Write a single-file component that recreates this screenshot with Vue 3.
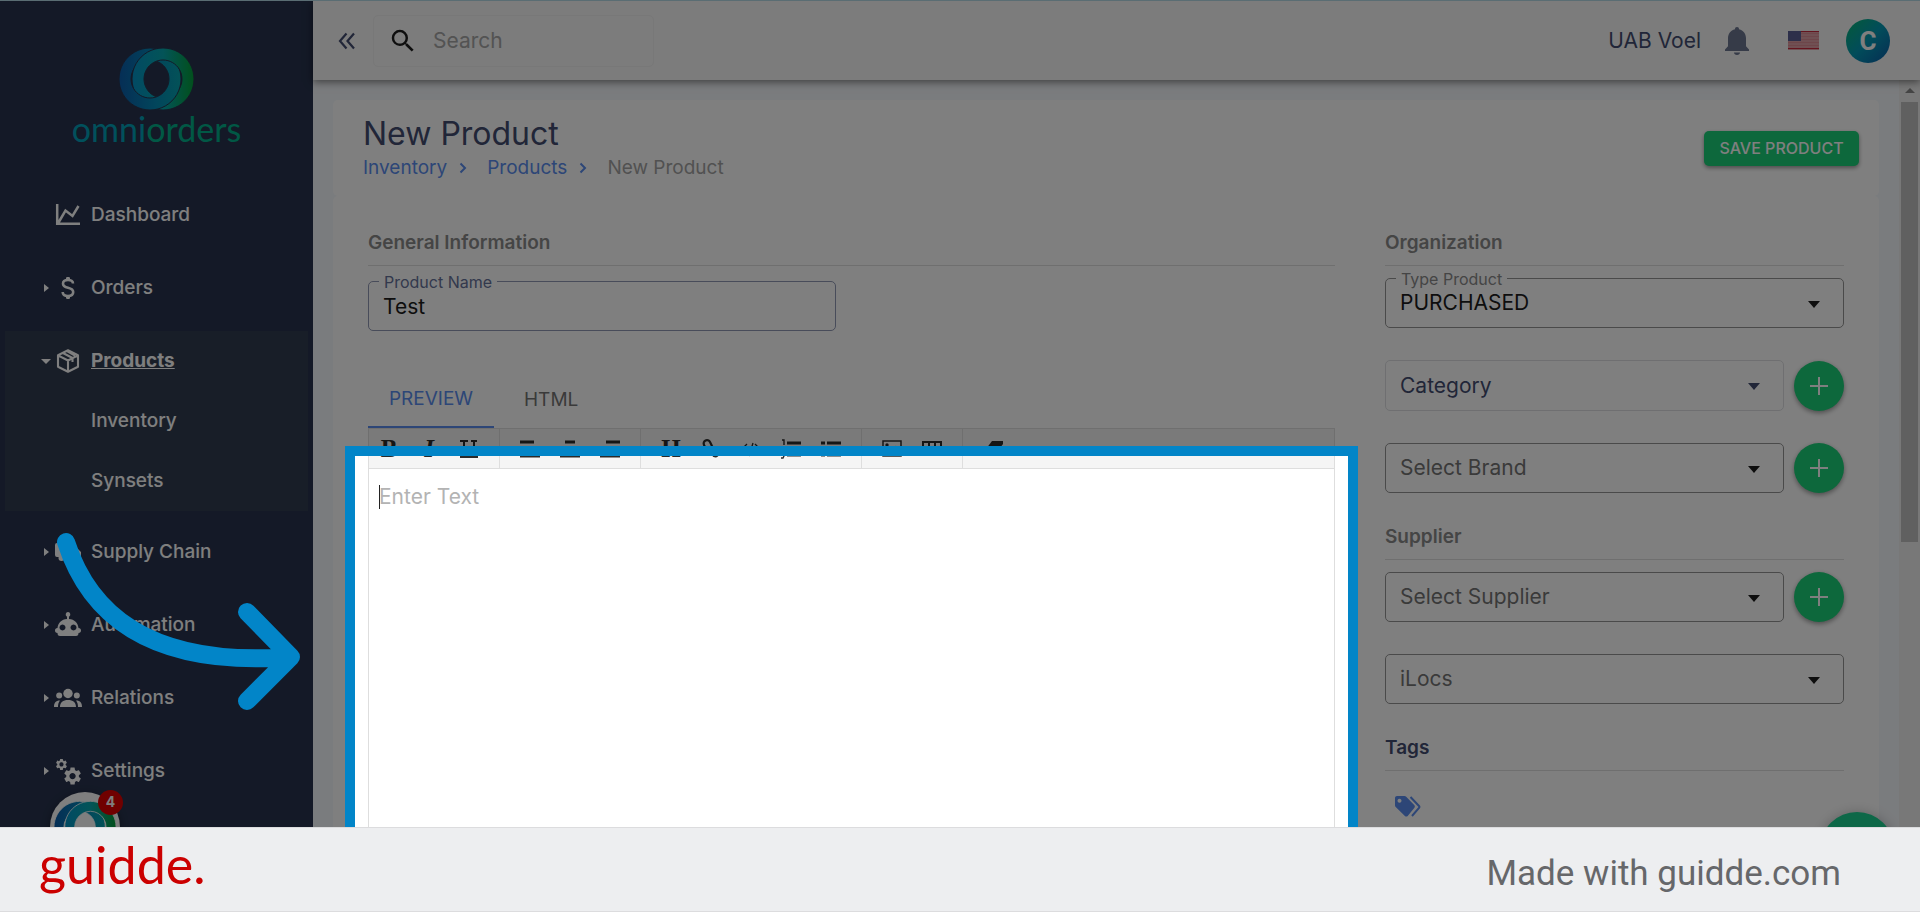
<template>
  <div class="frame">
    <svg class="defs" aria-hidden="true">
      <defs>
        <linearGradient id="ringLeft" x1="0" y1="0" x2="1" y2="0">
          <stop offset="0" stop-color="#0b5cab" />
          <stop offset="0.6" stop-color="#048cb8" />
          <stop offset="1" stop-color="#06a5b0" />
        </linearGradient>
        <linearGradient id="ringRight" x1="0" y1="0" x2="1" y2="0">
          <stop offset="0" stop-color="#0494c8" />
          <stop offset="0.5" stop-color="#06a8b0" />
          <stop offset="1" stop-color="#04a038" />
        </linearGradient>
        <clipPath id="lowerHalf"><rect x="-2" y="31" width="80" height="34" /></clipPath>
        <symbol id="rings" viewBox="0 0 75 62">
          <path class="ring" fill="url(#ringLeft)" fill-rule="evenodd" d="M31 0a31 31 0 1 0 .01 0zM31 12a19 19 0 1 1-.01 0z" />
          <path class="ring" fill="url(#ringRight)" fill-rule="evenodd" d="M44 0a31 31 0 1 0 .01 0zM44 12a19 19 0 1 1-.01 0z" />
          <g clip-path="url(#lowerHalf)">
            <path class="ring" fill="url(#ringLeft)" fill-rule="evenodd" d="M31 0a31 31 0 1 0 .01 0zM31 12a19 19 0 1 1-.01 0z" />
          </g>
        </symbol>
      </defs>
    </svg>

    <div class="stage">
      <aside class="sidebar">
        <a href="#" class="brand">
          <svg class="brand-mark"><use href="#rings" /></svg>
          <span class="brand-name"><span class="omni">omni</span><span class="orders">orders</span></span>
        </a>

        <nav class="menu">
          <div v-for="item in menu" :key="item.label" :class="item.children ? 'menu-group' : 'menu-single'">
            <a href="#" class="menu-item" :class="{ active: item.children }">
              <span class="caret" :class="item.caret"></span>
              <svg class="menu-icon" viewBox="0 0 28 28" v-html="item.icon"></svg>
              <span class="menu-label">{{ item.label }}</span>
            </a>
            <a v-for="child in item.children" :key="child" href="#" class="menu-child">{{ child }}</a>
          </div>
        </nav>
      </aside>

      <div class="page">
        <header class="topbar">
          <button class="collapse" aria-label="Collapse menu">
            <svg width="18" height="18" viewBox="0 0 18 18"><path d="M8.500 1.500L2 9l6.500 7.500M16 1.500L9.500 9l6.500 7.500" fill="none" stroke="#434c70" stroke-width="2.200" /></svg>
          </button>
          <div class="search">
            <svg width="30" height="30" viewBox="0 0 24 24"><path fill="#1c1c1c" d="M15.500 14h-.79l-.28-.27A6.471 6.471 0 0 0 16 9.500 6.500 6.500 0 1 0 9.500 16c1.610 0 3.090-.59 4.230-1.570l.27.28v.79l5 4.990L20.490 19l-4.990-5zm-6 0C7.010 14 5 11.990 5 9.500S7.010 5 9.500 5 14 7.010 14 9.500 11.990 14 9.500 14z" /></svg>
            <input type="text" placeholder="Search" aria-label="Search" />
          </div>
          <div class="account">
            <span class="company">UAB Voel</span>
            <button class="bell" aria-label="Notifications">
              <svg width="24" height="28" viewBox="0 0 24 28"><path fill="#6c7690" d="M12 0c1.300 0 2 .9 2 2.200 4.500 1 7 4.600 7 9v8l3 3.300V24H0v-1.500l3-3.300v-8c0-4.400 2.500-8 7-9C10 .9 10.700 0 12 0zM9 25.500h6c0 1.600-1.300 2.500-3 2.500s-3-.9-3-2.500z" /></svg>
            </button>
            <svg class="flag" width="31" height="19" viewBox="0 0 31 19">
              <rect width="31" height="19" fill="#e0a0a6" />
              <path d="M0 2.500h31M0 5.500h31M0 8.500h31M0 11.500h31M0 14.500h31" stroke="#dc8c94" stroke-width="1" />
              <path d="M0 .5h31M0 17.500h31" stroke="#c8283c" stroke-width="1" />
              <rect width="13" height="10" fill="#5b5f94" />
            </svg>
            <button class="avatar">C</button>
          </div>
        </header>

        <div class="body">
          <main class="content">
            <section class="card heading">
              <div>
                <h1>New Product</h1>
                <div class="crumbs">
                  <a href="#">Inventory</a>
                  <svg width="8" height="12" viewBox="0 0 8 12"><path d="M1.500 1.500L6 6l-4.500 4.500" /></svg>
                  <a href="#">Products</a>
                  <svg width="8" height="12" viewBox="0 0 8 12"><path d="M1.500 1.500L6 6l-4.500 4.500" /></svg>
                  <span>New Product</span>
                </div>
              </div>
              <button class="save">SAVE PRODUCT</button>
            </section>

            <section class="card columns">
              <div class="col-main">
                <h2>General Information</h2>
                <div class="field name-field">
                  <label for="name">Product Name</label>
                  <input id="name" v-model="name" type="text" />
                </div>

                <div class="tabs">
                  <button class="tab selected">PREVIEW</button>
                  <button class="tab">HTML</button>
                </div>

                <div class="editor">
                  <div class="toolbar">
                    <div v-for="(group, i) in tools" :key="i" class="tool-group">
                      <button v-for="tool in group" :key="tool.name" class="tool" :aria-label="tool.name">
                        <svg width="20" height="20" viewBox="0 0 20 20" v-html="tool.icon"></svg>
                      </button>
                    </div>
                  </div>
                  <div class="editor-body">
                    <span class="cursor"></span>
                    <textarea placeholder="Enter Text" aria-label="Description"></textarea>
                  </div>
                  <div class="spotlight"></div>
                </div>
              </div>

              <div class="col-side">
                <template v-for="section in sections" :key="section.title">
                  <h2>{{ section.title }}</h2>
                  <div v-for="field in section.fields" :key="field.id" class="row">
                    <div class="field select-field" :class="{ light: field.light }">
                      <label v-if="field.label" :for="field.id">{{ field.label }}</label>
                      <select :id="field.id" :class="field.tone" :aria-label="field.label || field.value">
                        <option>{{ field.value }}</option>
                      </select>
                      <span class="arrow"></span>
                    </div>
                    <button v-if="field.add" class="add" :aria-label="'Add ' + field.value">
                      <svg width="18" height="18" viewBox="0 0 18 18"><path d="M9 0v18M0 9h18" stroke="#fff" stroke-width="2" /></svg>
                    </button>
                  </div>
                </template>
                <h2 class="dark">Tags</h2>
                <svg class="tags" width="26" height="21" viewBox="0 0 26 21">
                  <path fill="#5a8dee" fill-rule="evenodd" d="M0 2C0 .9.900 0 2 0h7.500c.7 0 1.200.2 1.700.7l8 8.300c.9.900.9 2 0 2.900l-6.500 8c-.8.900-2 .9-2.800 0L.7 11C.2 10.500 0 10 0 9.300zM4.500 2.700a2 2 0 1 0 .01 0z" />
                  <path fill="none" stroke="#5a8dee" stroke-width="2" d="M15.500 1l8.500 9c.6.7.6 1.200 0 1.900L17 20" />
                </svg>
              </div>
            </section>
          </main>
          <div class="scrollbar"><span class="up"></span><span class="thumb"></span></div>
        </div>
      </div>

      <button class="fab" aria-label="Help"></button>
      <button class="widget" aria-label="Open guides">
        <svg width="62" height="52"><use href="#rings" /></svg>
        <span class="badge">4</span>
      </button>

      <svg class="pointer" width="260" height="180" viewBox="0 0 260 180">
        <path d="M16 12C38 80 95 138 240 127M197 82l44 45-44 44" fill="none" stroke="#0285c8" stroke-width="18" stroke-linecap="round" stroke-linejoin="round" />
      </svg>
    </div>

    <footer class="footer">
      <span class="guidde">guidde.</span>
      <span class="made">Made with guidde.com</span>
    </footer>
  </div>
</template>

<script setup>
import { ref } from 'vue';

const name = ref('Test');

const gear = 'M19.140 12.940c.04-.3.060-.61.060-.94 0-.32-.02-.64-.07-.94l2.030-1.580c.18-.14.230-.41.120-.61l-1.920-3.320c-.12-.22-.37-.29-.59-.22l-2.390.96c-.5-.38-1.030-.7-1.620-.94l-.36-2.540c-.04-.24-.24-.41-.48-.41h-3.840c-.24 0-.43.170-.47.410l-.36 2.540c-.59.240-1.130.570-1.620.940l-2.390-.96c-.22-.08-.47 0-.59.220L2.740 8.870c-.12.210-.08.470.120.610l2.030 1.580c-.05.300-.09.630-.09.940s.02.640.070.940l-2.030 1.580c-.18.140-.23.410-.12.610l1.920 3.320c.12.220.370.290.590.220l2.390-.96c.5.380 1.030.700 1.620.940l.36 2.540c.05.240.240.410.480.410h3.840c.24 0 .44-.17.470-.41l.36-2.540c.59-.24 1.130-.56 1.620-.94l2.390.96c.22.080.470 0 .59-.22l1.920-3.320c.12-.22.070-.47-.12-.61l-2.010-1.580zM12 15.600c-1.980 0-3.600-1.620-3.600-3.600s1.620-3.600 3.600-3.600 3.600 1.620 3.600 3.600-1.620 3.600-3.600 3.600z';

const menu = [
  { label: 'Dashboard', icon: '<path d="M3.200 3v19.800H26M4.500 21.500L11.500 9.500l7 5.500L24.500 5" fill="none" stroke="currentColor" stroke-width="2.500"/>' },
  { label: 'Orders', caret: 'right', icon: '<path d="M19 9.500C19 7 17 6 14 6s-5 1-5 3.700c0 2.500 2 3.300 5 4s5.200 1.600 5.200 4.300c0 2.800-2.200 4-5.200 4s-5.300-1.300-5.300-4M14 3v4M14 21v4" fill="none" stroke="currentColor" stroke-width="2.600"/><path d="M12 3.500h4v3h-4zM12 21.500h4v3h-4z" fill="currentColor"/>' },
  {
    label: 'Products',
    caret: 'down',
    children: ['Inventory', 'Synsets'],
    icon: '<path d="M14 3.200l10 5v11.600l-10 5-10-5V8.200zM4.500 8.600L14 13.500l9.500-4.900M14 13.500V24M9 6l9.500 5v4M13 4.200l8 4.500" fill="none" stroke="currentColor" stroke-width="2.100" stroke-linejoin="round"/>',
  },
  { label: 'Supply Chain', caret: 'right', icon: '<path d="M3 5h13v14H3a2 2 0 0 1-2-2V7a2 2 0 0 1 2-2zM17 9h5l5 5v5H17z" fill="currentColor"/><circle cx="7.500" cy="20" r="3" fill="currentColor"/><circle cx="21" cy="20" r="3" fill="currentColor"/>' },
  { label: 'Automation', caret: 'right', icon: '<path fill="currentColor" fill-rule="evenodd" d="M14 1a2.500 2.500 0 0 1 1 4.700V8c5.500.3 9 4 9.500 9 1.700 0 2.500 1 2.500 2.500S26.200 22 24.500 22c0 2-.8 3-2.500 3H6c-1.700 0-2.500-1-2.500-3C1.800 22 1 21 1 19.500S1.800 17 3.500 17c.5-5 4-8.700 9.500-9V5.700A2.500 2.500 0 0 1 14 1zM8.500 13.500a3 3 0 1 0 .01 0zM19.500 13.500a3 3 0 1 0 .01 0z"/>' },
  { label: 'Relations', caret: 'right', icon: '<g fill="currentColor"><circle cx="14" cy="9.500" r="4.700"/><circle cx="5.200" cy="11.500" r="3"/><circle cx="22.800" cy="11.500" r="3"/><path d="M6 23c0-4.500 3-7 8-7s8 2.500 8 7zM0 23c0-4 1.500-6.500 6-6.500-1.500 2-2 4-2 6.500zM28 23c0-4-1.500-6.500-6-6.500 1.500 2 2 4 2 6.500z"/></g>' },
  { label: 'Settings', caret: 'right', icon: `<g fill="currentColor"><path transform="translate(.5 .5) scale(.58)" d="${gear}"/><path transform="translate(8 8.500) scale(.88)" d="${gear}"/></g>` },
];

const lines = (d) => `<path d="${d}" stroke="currentColor" stroke-width="3"/>`;
const letter = (text, extra) => `<text x="10" y="18" text-anchor="middle" font-family="Liberation Serif, serif" font-size="25" fill="currentColor" ${extra}>${text}</text>`;

const tools = [
  [
    { name: 'Bold', icon: letter('B', 'font-weight="700"') },
    { name: 'Italic', icon: letter('I', 'font-style="italic" font-weight="700"') },
    { name: 'Underline', icon: '<path d="M1 2h8M12 2h6M5 2v8a5 4 0 0 0 10 0V2M1 18h18" fill="none" stroke="currentColor" stroke-width="2"/>' },
  ],
  [
    { name: 'Align left', icon: lines('M0 3h14M0 10h17M0 17h20') },
    { name: 'Align center', icon: lines('M5 3h10M3 10h14M0 17h20') },
    { name: 'Align right', icon: lines('M6 3h14M3 10h17M0 17h20') },
  ],
  [
    { name: 'Header', icon: letter('H', 'font-weight="700"') },
    { name: 'Link', icon: '<path d="M4 8l-1-2a3 3 0 0 1 6-3l2 4a3 3 0 0 1-1 4M10 10a3 3 0 0 0 1 5l2 2a3 3 0 0 0 4-4l-2-2" fill="none" stroke="currentColor" stroke-width="2.200"/>' },
    { name: 'Code', icon: '<path d="M6 5l-5 5 5 5M14 5l5 5-5 5M12 4L8 17" fill="none" stroke="currentColor" stroke-width="1.300"/>' },
    { name: 'Numbered list', icon: lines('M6 4h14M6 10h14M6 16h14') + '<path d="M1 1h2v5M0 14h3l-1 2 1 1-1 2H0" fill="none" stroke="currentColor" stroke-width="1.400"/>' },
    { name: 'Bulleted list', icon: lines('M6 4h14M6 10h14M6 16h14M0 4h4M0 10h4M0 16h4') },
  ],
  [
    { name: 'Image', icon: '<path d="M1 2h18v15H1zM1 15l5-5 4 4 4-6 5 6" fill="none" stroke="currentColor" stroke-width="1.500"/><circle cx="5" cy="6" r="1.700" fill="currentColor"/>' },
    { name: 'Table', icon: '<path d="M1 3h18v13H1zM7 3v13M13 3v13M1 10h18" fill="none" stroke="currentColor" stroke-width="2"/>' },
  ],
  [{ name: 'Clear', icon: '<path d="M9 2h11v3l-9 12H0v-3z" fill="currentColor"/>' }],
];

const sections = [
  {
    title: 'Organization',
    fields: [
      { id: 'type', label: 'Type Product', value: 'PURCHASED', tone: 'strong' },
      { id: 'category', value: 'Category', tone: 'navy', light: true, add: true },
      { id: 'brand', value: 'Select Brand', add: true },
    ],
  },
  {
    title: 'Supplier',
    fields: [
      { id: 'supplier', value: 'Select Supplier', add: true },
      { id: 'ilocs', value: 'iLocs' },
    ],
  },
];
</script>

<style>
body {
  margin: 0;
}
</style>

<style scoped>
.frame {
  display: flex;
  flex-direction: column;
  height: 100vh;
  font-family: Inter, 'Liberation Sans', sans-serif;
  font-size: 19px;
  line-height: 24px;
  color: #434c70;
}
.frame * {
  box-sizing: border-box;
}
button,
input,
select,
textarea {
  font: inherit;
  color: inherit;
  border: 0;
  background: none;
  padding: 0;
  outline: 0;
}
a {
  text-decoration: none;
}
.defs {
  position: absolute;
  width: 0;
  height: 0;
}
.ring {
  stroke: var(--gap);
  stroke-width: 1;
}

.stage {
  position: relative;
  flex: 1;
  min-height: 0;
  display: flex;
  overflow: hidden;
  border-top: 1px solid #5a6d73;
}

/* Sidebar */
.sidebar {
  flex: none;
  width: 313px;
  background: #28334e;
  color: #fff;
}
.brand {
  --gap: #28334e;
  display: flex;
  flex-direction: column;
  align-items: center;
  height: 177px;
  padding-top: 47px;
}
.brand-mark {
  width: 75px;
  height: 62px;
}
.brand-name {
  font-family: Lato, sans-serif;
  font-size: 34px;
  line-height: 38px;
}
.omni {
  color: #02a0b8;
}
.orders {
  color: #02b08a;
}
.menu-group {
  margin: 7px 5px 4px;
  background: #303d50;
}
.menu-item {
  display: flex;
  align-items: center;
  height: 73px;
  padding-left: 40px;
  color: #fff;
  font-weight: 500;
}
.menu-item.active {
  height: 60px;
  padding-left: 35px;
  font-weight: 700;
}
.active .menu-label {
  text-decoration: underline;
}
.caret {
  width: 12px;
  margin-right: 2px;
  display: flex;
  justify-content: center;
}
.caret.right::before {
  content: '';
  border: 4px solid transparent;
  border-left: 5px solid #fff;
  border-right: 0;
}
.caret.down::before {
  content: '';
  border: 5px solid transparent;
  border-top-color: #fff;
  border-bottom: 0;
}
.menu-icon {
  width: 28px;
  height: 28px;
  margin-right: 9px;
}
.menu-child {
  display: flex;
  align-items: center;
  height: 60px;
  padding-left: 86px;
  color: #fff;
  font-weight: 500;
}

/* Top bar */
.page {
  flex: 1;
  min-width: 0;
  display: flex;
  flex-direction: column;
  background: #f5f8fc;
}
.topbar {
  position: relative;
  flex: none;
  display: flex;
  align-items: center;
  height: 79px;
  padding: 0 30px 0 20px;
  background: #f8f8f8;
  box-shadow: 0 2px 8px rgba(0, 0, 0, 0.5);
}
.collapse {
  display: flex;
  align-items: center;
  justify-content: center;
  width: 28px;
  height: 28px;
}
.search {
  display: flex;
  align-items: center;
  width: 281px;
  height: 52px;
  margin-left: 12px;
  padding-left: 14px;
  border: 1px solid #f1f1f1;
  border-radius: 5px;
}
.search input {
  width: 200px;
  margin-left: 15px;
  font-size: 21px;
}
.search input::placeholder {
  color: #a6a6a6;
}
.account {
  display: flex;
  align-items: center;
  margin-left: auto;
}
.company {
  font-size: 21px;
}
.bell {
  display: flex;
  margin: 0 39px 0 24px;
}
.avatar {
  width: 44px;
  height: 44px;
  margin-left: 27px;
  border-radius: 50%;
  background: linear-gradient(135deg, #08b080 10%, #0499b5 50%, #0b60a8 95%);
  color: #fff;
  font-family: Roboto, sans-serif;
  font-size: 26px;
  font-weight: 700;
}

/* Content */
.body {
  flex: 1;
  display: flex;
}
.content {
  flex: 1;
  min-width: 0;
  padding: 20px 20px 0;
}
.card {
  background: #fff;
  border-radius: 5px;
}
.heading {
  display: flex;
  align-items: center;
  justify-content: space-between;
  padding: 16px 20px 16px 30px;
}
h1 {
  margin: 0 0 4px;
  font-size: 32px;
  line-height: 36px;
  font-weight: 400;
}
.crumbs {
  display: flex;
  align-items: center;
}
.crumbs a {
  color: #5a8dee;
}
.crumbs svg {
  margin: 0 20px 0 12px;
  fill: none;
  stroke: #5a8dee;
  stroke-width: 2;
}
.crumbs span {
  color: #a3a3a3;
}
.save {
  width: 155px;
  height: 35px;
  border-radius: 5px;
  background: #1ad078;
  color: #fff;
  font-size: 16px;
  font-weight: 500;
  box-shadow: 0 2px 4px rgba(0, 0, 0, 0.4);
}
.columns {
  display: grid;
  grid-template-columns: minmax(0, 967fr) minmax(0, 459fr);
  column-gap: 50px;
  padding: 35px 35px 0;
}
h2 {
  margin: 0;
  padding-bottom: 10px;
  border-bottom: 1px solid #dedede;
  font-size: 19px;
  line-height: 24px;
  font-weight: 600;
  color: #8a8a8a;
}
h2.dark {
  color: #434c70;
}

.field {
  position: relative;
  height: 50px;
  border: 1px solid #959595;
  border-radius: 5px;
}
.field label {
  position: absolute;
  top: -12px;
  left: 10px;
  padding: 0 5px;
  background: #fff;
  font-size: 16px;
  color: #8a8a8a;
}
.field input,
.field select {
  width: 100%;
  height: 100%;
  padding: 0 14px;
  font-size: 21px;
}
.name-field {
  width: 468px;
  margin-top: 15px;
  border-color: #9098b4;
}
.name-field label {
  color: #66729a;
}
.name-field input {
  color: #1c1c1c;
}
.tabs {
  display: flex;
  height: 57px;
  margin-top: 40px;
}
.tab {
  padding: 0 20px;
  font-size: 19px;
  color: #757575;
}
.tab.selected {
  width: 126px;
  color: #5a8dee;
  border-bottom: 2px solid #5a8dee;
}
.tab:not(.selected) {
  padding-left: 30px;
}

/* Editor */
.editor {
  position: relative;
  border: 1px solid #dedede;
}
.toolbar {
  display: flex;
  height: 40px;
  background: #f5f5f5;
  border-bottom: 1px solid #dedede;
}
.tool-group {
  display: flex;
  padding: 0 10px;
  border-right: 1px solid #dedede;
}
.tool-group:first-child {
  padding-left: 0;
}
.tool-group:last-child {
  border-right: 0;
}
.tool {
  display: flex;
  align-items: center;
  justify-content: center;
  width: 40px;
  color: #2a2a2a;
}
.tool svg {
  overflow: visible;
}
.editor-body {
  position: relative;
  height: 420px;
  padding: 16px 10px;
}
.cursor {
  position: absolute;
  width: 1px;
  height: 24px;
  background: #222;
}
textarea {
  display: block;
  width: 100%;
  height: 100%;
  resize: none;
  font-size: 21px;
}
textarea::placeholder {
  color: #b3b3b3;
}
/* lights up the editor and dims everything around it */
.spotlight {
  position: absolute;
  z-index: 5;
  top: 17px;
  left: -24px;
  right: -24px;
  bottom: -40px;
  border: 10px solid #0285c8;
  box-shadow: 0 0 0 3000px rgba(0, 0, 0, 0.5);
  pointer-events: none;
}

/* Side column */
.row {
  display: flex;
  align-items: center;
  gap: 10px;
  margin-bottom: 32px;
}
h2 + .row {
  margin-top: 12px;
}
.select-field {
  flex: 1;
}
.select-field.light {
  height: 51px;
  border-color: #dedfe3;
}
select {
  appearance: none;
}
.field select {
  color: #757575;
}
.field select.strong {
  color: #1c1c1c;
}
.field select.navy {
  color: #434c70;
}
.arrow {
  position: absolute;
  top: 22px;
  right: 23px;
  border: 6px solid transparent;
  border-top: 7px solid #1c1c1c;
  border-bottom: 0;
  pointer-events: none;
}
.light .arrow {
  border-top-color: #434c70;
}
.add {
  display: flex;
  align-items: center;
  justify-content: center;
  width: 50px;
  height: 50px;
  border-radius: 50%;
  background: #1ad078;
  box-shadow: 0 2px 5px rgba(0, 0, 0, 0.4);
}
.tags {
  display: block;
  margin: 25px 10px;
}

.scrollbar {
  width: 21px;
  padding: 8px 2px 0;
  background: #f1f1f1;
}
.up {
  display: block;
  width: 0;
  margin: 0 auto 9px;
  border: 5px solid transparent;
  border-bottom-color: #8a8a8a;
  border-top: 0;
}
.thumb {
  display: block;
  height: 440px;
  background: #c1c1c1;
}

/* Floating things */
.fab {
  position: absolute;
  right: 26px;
  bottom: -59px;
  width: 74px;
  height: 74px;
  border-radius: 50%;
  background: #1cd090;
  box-shadow: 0 2px 14px rgba(0, 0, 0, 0.3);
}
.widget {
  --gap: #fff;
  position: absolute;
  left: 50px;
  bottom: -35px;
  display: flex;
  justify-content: center;
  align-items: center;
  width: 70px;
  height: 70px;
  border-radius: 50%;
  background: #fff;
  box-shadow: 0 2px 8px rgba(0, 0, 0, 0.4);
}
.badge {
  position: absolute;
  top: -2px;
  right: -3px;
  width: 25px;
  height: 25px;
  border-radius: 50%;
  background: #e00000;
  color: #fff;
  font-size: 14px;
  font-weight: 700;
}
.pointer {
  position: absolute;
  z-index: 6;
  top: 529px;
  left: 50px;
}

.footer {
  position: relative;
  z-index: 7;
  flex: none;
  display: flex;
  align-items: center;
  justify-content: space-between;
  height: 85px;
  padding: 0 79px 0 39px;
  background: #edeef0;
  border-top: 1px solid #dcdcde;
  border-bottom: 1px solid #dcdcde;
}
.guidde {
  margin-bottom: 12px;
  font-family: Lato, sans-serif;
  font-size: 52px;
  line-height: 60px;
  color: #cb0000;
}
.made {
  padding-top: 8px;
  font-family: Roboto, sans-serif;
  font-size: 35px;
  line-height: 42px;
  color: #66676a;
}
</style>
